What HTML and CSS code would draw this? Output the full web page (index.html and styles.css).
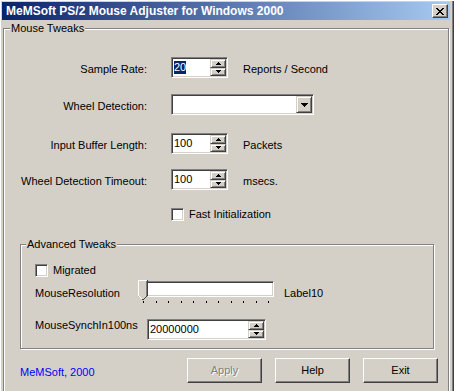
FILE: index.html
```html
<!doctype html>
<html lang="en">
<head>
<meta charset="utf-8">
<title>MeMSoft PS/2 Mouse Adjuster for Windows 2000</title>
<link rel="stylesheet" href="styles.css">
</head>
<body>
<div class="window">
    <div class="titlebar">
        <span class="title">MeMSoft PS/2 Mouse Adjuster for Windows 2000</span>
        <span class="close">
            <svg width="8" height="7" shape-rendering="crispEdges" fill="#000">
                <rect x="0" y="0" width="2" height="1"/><rect x="6" y="0" width="2" height="1"/>
                <rect x="1" y="1" width="2" height="1"/><rect x="5" y="1" width="2" height="1"/>
                <rect x="2" y="2" width="4" height="1"/>
                <rect x="3" y="3" width="2" height="1"/>
                <rect x="2" y="4" width="4" height="1"/>
                <rect x="1" y="5" width="2" height="1"/><rect x="5" y="5" width="2" height="1"/>
                <rect x="0" y="6" width="2" height="1"/><rect x="6" y="6" width="2" height="1"/>
            </svg>
        </span>
    </div>

    <fieldset class="group tweaks">
        <legend>Mouse Tweaks</legend>

        <div class="row rate">
            <span class="lbl">Sample Rate:</span>
            <div class="spin">
                <span class="val"><span class="sel">20</span></span>
                <div class="arrows">
                    <span><svg width="5" height="3" shape-rendering="crispEdges"><path d="M2 0h1v1h1v1h1v1H0V2h1V1h1z"/></svg></span>
                    <span><svg width="5" height="3" shape-rendering="crispEdges"><path d="M0 0h5v1H4v1H3v1H2V2H1V1H0z"/></svg></span>
                </div>
            </div>
            <span class="unit">Reports / Second</span>
        </div>

        <div class="row wheel">
            <span class="lbl">Wheel Detection:</span>
            <div class="combo">
                <span class="drop"><svg width="7" height="4" shape-rendering="crispEdges"><path d="M0 0h7v1H6v1H5v1H4v1H3V3H2V2H1V1H0z"/></svg></span>
            </div>
        </div>

        <div class="row buffer">
            <span class="lbl">Input Buffer Length:</span>
            <div class="spin">
                <span class="val">100</span>
                <div class="arrows">
                    <span><svg width="5" height="3" shape-rendering="crispEdges"><path d="M2 0h1v1h1v1h1v1H0V2h1V1h1z"/></svg></span>
                    <span><svg width="5" height="3" shape-rendering="crispEdges"><path d="M0 0h5v1H4v1H3v1H2V2H1V1H0z"/></svg></span>
                </div>
            </div>
            <span class="unit">Packets</span>
        </div>

        <div class="row timeout">
            <span class="lbl">Wheel Detection Timeout:</span>
            <div class="spin">
                <span class="val">100</span>
                <div class="arrows">
                    <span><svg width="5" height="3" shape-rendering="crispEdges"><path d="M2 0h1v1h1v1h1v1H0V2h1V1h1z"/></svg></span>
                    <span><svg width="5" height="3" shape-rendering="crispEdges"><path d="M0 0h5v1H4v1H3v1H2V2H1V1H0z"/></svg></span>
                </div>
            </div>
            <span class="unit">msecs.</span>
        </div>

        <div class="row fast">
            <span class="check"></span>
            <span class="check-text">Fast Initialization</span>
        </div>

        <fieldset class="group adv">
            <legend>Advanced Tweaks</legend>

            <div class="adv-body">
                <div class="row migrated">
                    <span class="check"></span>
                    <span class="check-text">Migrated</span>
                </div>

                <div class="res">
                    <span class="res-lbl">MouseResolution</span>
                    <div class="slider">
                        <div class="track"></div>
                        <svg class="thumb" width="10" height="20" shape-rendering="crispEdges">
                            <path d="M0 0h10v16l-4 4h-2l-4-4z" fill="#d4d0c8"/>
                            <path d="M0 0h9v1H1v15H0z" fill="#fff"/>
                            <rect x="1" y="16" width="1" height="1" fill="#fff"/>
                            <rect x="2" y="17" width="1" height="1" fill="#fff"/>
                            <rect x="3" y="18" width="1" height="1" fill="#fff"/>
                            <rect x="8" y="1" width="1" height="15" fill="#808080"/>
                            <rect x="9" y="0" width="1" height="16" fill="#404040"/>
                            <rect x="8" y="16" width="1" height="1" fill="#404040"/>
                            <rect x="7" y="17" width="1" height="1" fill="#404040"/>
                            <rect x="6" y="18" width="1" height="1" fill="#404040"/>
                            <rect x="4" y="19" width="2" height="1" fill="#404040"/>
                        </svg>
                        <div class="ticks"><i></i><i></i><i></i><i></i><i></i><i></i><i></i><i></i><i></i><i></i><i></i></div>
                    </div>
                    <span class="res-val">Label10</span>
                </div>

                <div class="synch">
                    <span class="synch-lbl">MouseSynchIn100ns</span>
                    <div class="spin wide">
                        <span class="val">20000000</span>
                        <div class="arrows">
                            <span><svg width="5" height="3" shape-rendering="crispEdges"><path d="M2 0h1v1h1v1h1v1H0V2h1V1h1z"/></svg></span>
                            <span><svg width="5" height="3" shape-rendering="crispEdges"><path d="M0 0h5v1H4v1H3v1H2V2H1V1H0z"/></svg></span>
                        </div>
                    </div>
                </div>
            </div>
        </fieldset>

        <div class="footer">
            <span class="copy">MeMSoft, 2000</span>
            <div class="buttons">
                <button class="btn" disabled>Apply</button>
                <button class="btn">Help</button>
                <button class="btn">Exit</button>
            </div>
        </div>
    </fieldset>
</div>
</body>
</html>
```

FILE: styles.css
```css
*{
    box-sizing:border-box;
}
body{
    margin:0;
    background:#d4d0c8;
    font:11px/13px "Liberation Sans", Arial, sans-serif;
    color:#000;
}
.window{
    width:454px;
    height:391px;
    overflow:hidden;
    padding:2px 4px 0 2px;
    background:#d4d0c8;
    box-shadow:inset 1px 1px #fff, inset -1px 0 #404040, inset -2px 0 #808080;
}

/* title bar */
.titlebar{
    height:18px;
    display:flex;
    align-items:center;
    justify-content:space-between;
    padding:0 2px 0 4px;
    background:linear-gradient(to right, #0a246a, #a6caf0);
}
.title{
    color:#fff;
    font-weight:bold;
    font-size:12px;
}
.close{
    width:16px;
    height:14px;
    display:flex;
    align-items:center;
    justify-content:center;
    background:#d4d0c8;
    border:1px solid;
    border-color:#fff #404040 #404040 #fff;
    box-shadow:inset -1px -1px #808080;
}

/* group boxes */
.group{
    margin:0;
    padding:0;
    min-width:0;
    border:1px solid #808080;
    box-shadow:1px 1px #fff, inset 1px 1px #fff;
}
.group legend{
    padding:0 1px;
    line-height:13px;
    background:#d4d0c8;
}
.tweaks{
    margin:2px 0 0 1px;
    width:446px;
    padding-bottom:20px;
}
.tweaks > legend{
    margin-left:6px;
}
.adv{
    margin:17px 14px 0 16px;
    padding-bottom:8px;
}
.adv > legend{
    margin-left:5px;
}
.adv-body{
    padding-left:14px;
}

/* rows */
.row{
    display:flex;
    align-items:center;
    height:21px;
}
.rate{ margin-top:22px; }
.wheel{ margin-top:16px; }
.buffer{ margin-top:18px; }
.timeout{ margin-top:15px; }
.fast{
    margin-top:18px;
    height:13px;
    padding-left:167px;
}
.lbl{
    width:143px;
    margin-right:24px;
    padding-top:3px;
    text-align:right;
    white-space:nowrap;
}
.unit{
    margin-left:15px;
    padding-top:3px;
}

/* sunken fields */
.spin,.combo,.check,.track{
    background:#fff;
    border:1px solid;
    border-color:#808080 #fff #fff #808080;
    box-shadow:inset 1px 1px #404040, inset -1px -1px #d4d0c8;
}
.spin{
    display:flex;
    width:57px;
    height:21px;
    padding:1px;
}
.spin.wide{
    width:119px;
}
.val{
    flex:1;
    display:flex;
    align-items:center;
    padding-left:1px;
}
.sel{
    background:#0a246a;
    color:#fff;
}
.arrows{
    width:16px;
    display:flex;
    flex-direction:column;
}
.arrows span,.drop{
    display:flex;
    align-items:center;
    justify-content:center;
    background:#d4d0c8;
    border:1px solid;
    border-color:#d4d0c8 #404040 #404040 #d4d0c8;
    box-shadow:inset 1px 1px #fff, inset -1px -1px #808080;
}
.arrows span{
    flex:1;
}
.combo{
    display:flex;
    justify-content:flex-end;
    width:143px;
    height:21px;
    padding:1px;
}
.drop{
    width:16px;
}
.check{
    width:13px;
    height:13px;
    flex:none;
}
.check-text{
    margin-left:5px;
}

/* advanced */
.migrated{
    margin-top:13px;
    height:13px;
}
.res{
    display:flex;
    align-items:flex-start;
    margin-top:3px;
}
.res-lbl{
    width:103px;
    padding-top:7px;
}
.res-val{
    margin-left:10px;
    padding-top:7px;
}
.slider{
    position:relative;
    width:136px;
    height:23px;
}
.track{
    height:16px;
    margin-top:1px;
}
.thumb{
    position:absolute;
    left:0;
    top:0;
}
.ticks{
    display:flex;
    justify-content:space-between;
    margin-top:4px;
    padding:0 5px;
}
.ticks i{
    width:1px;
    height:2px;
    background:#000;
}
.synch{
    display:flex;
    align-items:flex-start;
    margin-top:16px;
}
.synch-lbl{
    width:112px;
}

/* footer */
.footer{
    display:flex;
    align-items:center;
    margin:9px 10px 0 16px;
}
.copy{
    color:#0000ff;
    padding-top:3px;
}
.buttons{
    margin-left:auto;
    display:flex;
    gap:13px;
}
.btn{
    width:75px;
    height:25px;
    padding:0;
    font:inherit;
    color:#000;
    background:#d4d0c8;
    border:1px solid;
    border-color:#fff #404040 #404040 #fff;
    box-shadow:inset -1px -1px #808080;
}
.btn:disabled{
    color:#808080;
    text-shadow:1px 1px #fff;
}
```
